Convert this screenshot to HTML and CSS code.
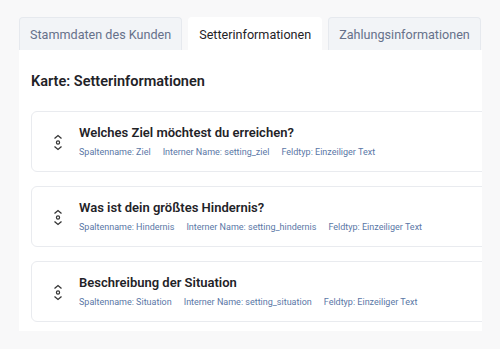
FILE: index.html
```html
<!DOCTYPE html>
<html lang="de">
<head>
<meta charset="utf-8">
<link rel="stylesheet" href="styles.css">
</head>
<body>
<div class="wrap">
  <div class="tabs">
    <div class="tab">Stammdaten des Kunden</div>
    <div class="tab active">Setterinformationen</div>
    <div class="tab">Zahlungsinformationen</div>
  </div>
  <div class="panel">
    <h2 class="panel-title">Karte: Setterinformationen</h2>
    <div class="list">
      <div class="card">
        <svg class="handle" width="10" height="17" viewBox="0 0 10 17"><path d="M1.5 4.5 L5 1.5 L8.5 4.5" fill="none" stroke="#333" stroke-width="1.3"/><circle cx="5" cy="8.5" r="1.6" fill="none" stroke="#333" stroke-width="1.2"/><path d="M1.5 12.5 L5 15.5 L8.5 12.5" fill="none" stroke="#333" stroke-width="1.3"/></svg>
        <div class="body">
          <div class="title">Welches Ziel möchtest du erreichen?</div>
          <div class="meta"><span>Spaltenname: Ziel</span><span>Interner Name: setting_ziel</span><span>Feldtyp: Einzeiliger Text</span></div>
        </div>
      </div>
      <div class="card">
        <svg class="handle" width="10" height="17" viewBox="0 0 10 17"><path d="M1.5 4.5 L5 1.5 L8.5 4.5" fill="none" stroke="#333" stroke-width="1.3"/><circle cx="5" cy="8.5" r="1.6" fill="none" stroke="#333" stroke-width="1.2"/><path d="M1.5 12.5 L5 15.5 L8.5 12.5" fill="none" stroke="#333" stroke-width="1.3"/></svg>
        <div class="body">
          <div class="title">Was ist dein größtes Hindernis?</div>
          <div class="meta"><span>Spaltenname: Hindernis</span><span>Interner Name: setting_hindernis</span><span>Feldtyp: Einzeiliger Text</span></div>
        </div>
      </div>
      <div class="card">
        <svg class="handle" width="10" height="17" viewBox="0 0 10 17"><path d="M1.5 4.5 L5 1.5 L8.5 4.5" fill="none" stroke="#333" stroke-width="1.3"/><circle cx="5" cy="8.5" r="1.6" fill="none" stroke="#333" stroke-width="1.2"/><path d="M1.5 12.5 L5 15.5 L8.5 12.5" fill="none" stroke="#333" stroke-width="1.3"/></svg>
        <div class="body">
          <div class="title">Beschreibung der Situation</div>
          <div class="meta"><span>Spaltenname: Situation</span><span>Interner Name: setting_situation</span><span>Feldtyp: Einzeiliger Text</span></div>
        </div>
      </div>
    </div>
  </div>
</div>
</body>
</html>
```
FILE: styles.css
```css
html, body { margin: 0; padding: 0; }
body {
  background: #f8f8f9;
  font-family: Roboto, "Liberation Sans", sans-serif;
  color: #1f2328;
  width: 500px;
  height: 349px;
  overflow: hidden;
}
.wrap { padding: 17px 18px 0 19px; }
.tabs { display: flex; gap: 6px; height: 33px; }
.tab {
  box-sizing: border-box;
  height: 33px;
  padding: 0 10px;
  display: flex;
  align-items: center;
  white-space: nowrap;
  font-size: 12.6px;
  color: #66718a;
  background: #f2f4f7;
  border: 1px solid #e6e9ee;
  border-bottom: none;
  border-radius: 4px 4px 0 0;
}
.tab.active { background: #fff; color: #1f2328; border-color: #fff; }
.panel {
  background: #fff;
  padding: 12px 0 9px 12px;
  overflow: hidden;
}
.panel-title { margin: 10px 0 19px; font-size: 14.5px; font-weight: 600; line-height: 20px; }
.list { display: flex; flex-direction: column; gap: 14px; margin-right: -30px; }
.card {
  box-sizing: border-box;
  height: 61px;
  border: 1px solid #e9ebef;
  border-radius: 6px;
  display: flex;
  align-items: center;
  padding-left: 21px;
}
.handle { flex: none; margin-right: 16px; margin-top: 2px; }
.body { display: flex; flex-direction: column; gap: 4px; }
.title { font-size: 13px; font-weight: 600; line-height: 18px; color: #1f2328; }
.meta { display: flex; gap: 12px; font-size: 9px; color: #5a77a6; line-height: 13px; white-space: nowrap; }
```
